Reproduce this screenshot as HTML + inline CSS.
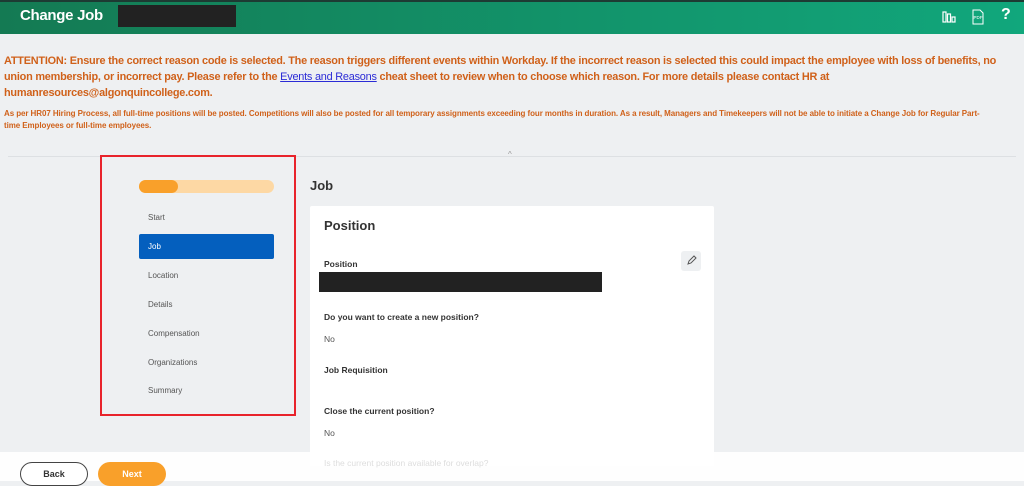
<!DOCTYPE html>
<html><head><meta charset="utf-8">
<style>
*{margin:0;padding:0;box-sizing:border-box}
body{width:1024px;height:481px;overflow:hidden;background:#eef0f2;font-family:"Liberation Sans",sans-serif;position:relative}
.hdr{position:absolute;left:0;top:0;width:1024px;height:34px;background:linear-gradient(90deg,#147a53,#11a77c);border-top:2px solid #1d3b33}
.hdr .t{position:absolute;left:20px;top:5px;color:#fff;font-weight:bold;font-size:15px;letter-spacing:-0.3px}
.blk{position:absolute;background:#222}
.att{position:absolute;left:4px;top:53px;width:1016px;color:#d0611a;font-weight:bold;font-size:10.9px;letter-spacing:-0.22px;line-height:16px}
.att a{color:#2b2bd6;text-decoration:underline;font-weight:normal}
.note{position:absolute;left:4px;top:108px;width:1012px;color:#d0611a;font-weight:bold;font-size:8px;line-height:12px;letter-spacing:-0.08px}
.hr{position:absolute;left:8px;top:156px;width:1008px;height:1px;background:#dde0e3}
.red{position:absolute;left:100px;top:155px;width:196px;height:261px;border:2px solid #e8232b}
.prog{position:absolute;left:139px;top:180px;width:135px;height:13px;border-radius:7px;background:#fdd8a4}
.prog div{width:39px;height:13px;border-radius:7px;background:#f9a02a}
.step{position:absolute;left:148px;font-size:8px;color:#555}
.sel{position:absolute;left:139px;top:234px;width:135px;height:25px;background:#045fbe;border-radius:2px;color:#fff;font-size:8px;padding:8px 9px}
.jobh{position:absolute;left:310px;top:178px;font-size:13px;font-weight:bold;color:#333}
.card{position:absolute;left:310px;top:206px;width:404px;height:260px;background:#fff;border-radius:2px}
.card .l{position:absolute;left:14px;font-size:8.5px;font-weight:bold;color:#333}
.card .v{position:absolute;left:14px;font-size:8.5px;color:#555}
.foot{position:absolute;left:0;top:452px;width:1024px;height:29px;background:#fff;opacity:.93}
.btn{position:absolute;top:462px;width:68px;height:24px;border-radius:12px;font-size:9px;font-weight:bold;text-align:center;line-height:22px}
</style></head><body>
<div class="hdr"><div class="t">Change Job</div>
<svg style="position:absolute;left:942px;top:8px" width="14" height="14" viewBox="0 0 14 14" fill="none" stroke="#fff" stroke-width="1.2"><rect x="1" y="2" width="3" height="10"/><rect x="5.5" y="4" width="3" height="8"/><rect x="10" y="7" width="3" height="5"/></svg>
<svg style="position:absolute;left:972px;top:7px" width="12" height="16" viewBox="0 0 12 16" fill="none" stroke="#fff" stroke-width="1"><path d="M1 1h7l3 3v11H1z"/><text x="1.5" y="10" font-size="4.5" fill="#fff" stroke="none" font-family="Liberation Sans">PDF</text></svg>
<div style="position:absolute;left:1001px;top:4px;color:#fff;font-size:16px;font-weight:bold">?</div>
</div>
<div class="blk" style="left:118px;top:5px;width:118px;height:22px"></div>
<div class="att">ATTENTION: Ensure the correct reason code is selected. The reason triggers different events within Workday. If the incorrect reason is selected this could impact the employee with loss of benefits, no<br>union membership, or incorrect pay. Please refer to the <a>Events and Reasons</a> cheat sheet to review when to choose which reason. For more details please contact HR at<br>humanresources@algonquincollege.com.</div>
<div class="note">As per HR07 Hiring Process, all full-time positions will be posted. Competitions will also be posted for all temporary assignments exceeding four months in duration. As a result, Managers and Timekeepers will not be able to initiate a Change Job for Regular Part-<br>time Employees or full-time employees.</div>
<div class="hr"></div>
<div style="position:absolute;left:508px;top:150px;font-size:8px;color:#999">^</div>
<div class="red"></div>
<div class="prog"><div></div></div>
<div class="step" style="top:213px">Start</div>
<div class="sel">Job</div>
<div class="step" style="top:271px">Location</div>
<div class="step" style="top:300px">Details</div>
<div class="step" style="top:329px">Compensation</div>
<div class="step" style="top:358px">Organizations</div>
<div class="step" style="top:386px">Summary</div>
<div class="jobh">Job</div>
<div class="card">
<div style="position:absolute;left:14px;top:12px;font-size:13px;font-weight:bold;color:#333">Position</div>
<div class="l" style="top:53px">Position</div>
<div style="position:absolute;left:371px;top:45px;width:20px;height:20px;background:#eef0f2;border-radius:3px"><svg width="20" height="20" viewBox="0 0 20 20"><path d="M7 13l1-3 5-5 2 2-5 5z" fill="none" stroke="#555" stroke-width="1"/></svg></div>
<div class="blk" style="left:9px;top:66px;width:283px;height:20px"></div>
<div class="l" style="top:106px">Do you want to create a new position?</div>
<div class="v" style="top:128px">No</div>
<div class="l" style="top:159px">Job Requisition</div>
<div class="l" style="top:200px">Close the current position?</div>
<div class="v" style="top:222px">No</div>
</div>
<div class="foot"></div>
<div style="position:absolute;left:324px;top:458px;font-size:8.5px;color:#ddd">Is the current position available for overlap?</div>
<div class="btn" style="left:20px;border:1px solid #444;background:#fff;color:#333">Back</div>
<div class="btn" style="left:98px;background:#f9a02a;color:#fff;line-height:24px">Next</div>
</body></html>
